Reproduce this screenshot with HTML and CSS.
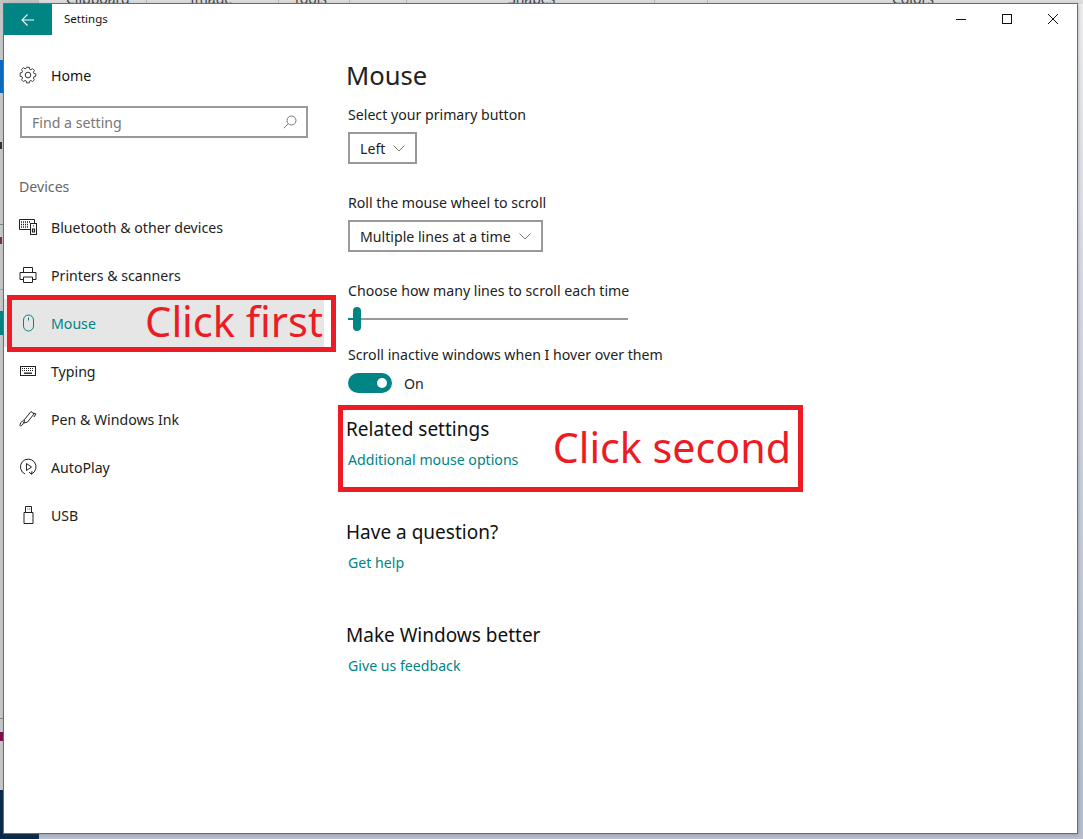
FILE: index.html
```html
<!DOCTYPE html>
<html lang="en">

<head>
    <meta charset="UTF-8">
    <title>Settings</title>
    <link rel="stylesheet" href="styles.css">
</head>

<body>
    <div class="desktop">
        <!-- bits of the app behind the window -->
        <div class="ribbon">
            <span class="ribbon-label label-clipboard">Clipboard</span>
            <span class="ribbon-label label-image">Image</span>
            <span class="ribbon-label label-tools">Tools</span>
            <span class="ribbon-label label-shapes">Shapes</span>
            <span class="ribbon-label label-colors">Colors</span>
        </div>
        <div class="strip-blue"></div>
        <div class="strip-glyph glyph-one"></div>
        <div class="strip-line line-one"></div>
        <div class="strip-glyph glyph-two"></div>
        <div class="strip-line line-two"></div>
        <div class="strip-teal"></div>
        <div class="strip-line line-three"></div>
        <div class="strip-purple"></div>
        <div class="strip-navy"></div>

        <div class="window">
            <div class="titlebar">
                <div class="back-button">
                    <svg width="16" height="16" viewBox="0 0 16 16" fill="none" stroke="#fff" stroke-width="1.1">
                        <path d="M2 8H14M7.5 2.5L2 8l5.500 5.500" />
                    </svg>
                </div>
                <div class="title">Settings</div>
                <div class="window-buttons">
                    <svg class="win-icon" width="12" height="12" viewBox="0 0 12 12" fill="none" stroke="#111">
                        <path d="M1 6.500H11" />
                    </svg>
                    <svg class="win-icon" width="12" height="12" viewBox="0 0 12 12" fill="none" stroke="#111">
                        <rect x="1.500" y="1.500" width="9" height="9" />
                    </svg>
                    <svg class="win-icon" width="12" height="12" viewBox="0 0 12 12" fill="none" stroke="#111">
                        <path d="M1 1L11 11M11 1L1 11" />
                    </svg>
                </div>
            </div>

            <div class="main">
                <div class="sidebar">
                    <div class="home-row">
                        <svg class="nav-icon" width="18" height="18" viewBox="0 0 18 18" fill="none" stroke="#333" stroke-width="1">
                            <path d="M7.600 1.200h2.800l.4 2.100 1.300.6 1.800-1.200 2 2-1.200 1.800.6 1.300 2 .4v2.800l-2 .4-.6 1.300 1.200 1.800-2 2-1.800-1.200-1.300.6-.4 2H7.600l-.4-2-1.300-.6-1.800 1.200-2-2 1.200-1.800-.6-1.300-2-.4V7.200l2-.4.6-1.300-1.200-1.800 2-2 1.800 1.200 1.300-.6z" transform="translate(.5 .1) scale(.94)" />
                            <circle cx="9" cy="9" r="2.800" />
                        </svg>
                        <span>Home</span>
                    </div>
                    <div class="search-box">
                        <span>Find a setting</span>
                        <svg width="14" height="14" viewBox="0 0 14 14" fill="none" stroke="#777">
                            <circle cx="8.500" cy="5.500" r="4.500" />
                            <path d="M5.300 8.700L.8 13.200" />
                        </svg>
                    </div>
                    <div class="section-label">Devices</div>
                    <div class="nav-list">
                        <div class="nav-item">
                            <svg class="nav-icon" width="18" height="18" viewBox="0 0 18 18" fill="none" stroke="#222">
                                <path d="M11 11.500H.5v-10h15V5" />
                                <path d="M2 4h10M2 6.500h7M2 9h7" stroke-dasharray="1 1" stroke-width="1.400" />
                                <rect x="11.500" y="5.500" width="6" height="11" fill="#fff" />
                                <path d="M14.500 7.500v1M13.500 11h2v3h-2z" stroke-width="1.200" />
                            </svg>
                            <span>Bluetooth &amp; other devices</span>
                        </div>
                        <div class="nav-item">
                            <svg class="nav-icon" width="18" height="18" viewBox="0 0 18 18" fill="none" stroke="#222">
                                <path d="M4.500 6V1.500h9V6M4.500 13.500H1V6.500h16v7h-3.500M4.500 11h9v5.500h-9z" />
                            </svg>
                            <span>Printers &amp; scanners</span>
                        </div>
                        <div class="nav-item nav-active">
                            <svg class="nav-icon" width="18" height="18" viewBox="0 0 18 18" fill="none" stroke="#008484">
                                <rect x="4.500" y="1" width="10" height="16" rx="5" />
                                <path d="M9.500 3.500v3" />
                            </svg>
                            <span>Mouse</span>
                        </div>
                        <div class="nav-item">
                            <svg class="nav-icon" width="18" height="18" viewBox="0 0 18 18" fill="none" stroke="#222">
                                <rect x="1.500" y="4.500" width="15" height="9" />
                                <path d="M3 6.500h12M3 8.500h12" stroke-dasharray="1 1" stroke-width="1.200" />
                                <path d="M5 11.200h8" stroke-width="1.400" />
                            </svg>
                            <span>Typing</span>
                        </div>
                        <div class="nav-item">
                            <svg class="nav-icon" width="18" height="18" viewBox="0 0 18 18" fill="none" stroke="#222">
                                <path d="M12 1.500l3 2.500-6.500 8-3.500 1 .5-3.500zM14.500 3l2.500 1-2 3" />
                                <path d="M5 12c-1 3-3.500 5-4 3.500-.5-1.500 2-4.500 3.800-5.500" />
                            </svg>
                            <span>Pen &amp; Windows Ink</span>
                        </div>
                        <div class="nav-item">
                            <svg class="nav-icon" width="18" height="18" viewBox="0 0 18 18" fill="none" stroke="#222">
                                <path d="M6 16A7.800 7.800 0 1 1 12.500 16" />
                                <path d="M10 14.200l2.500 2 .5-3" />
                                <path d="M7.500 5.500l5 3.500-5 3.500z" />
                            </svg>
                            <span>AutoPlay</span>
                        </div>
                        <div class="nav-item">
                            <svg class="nav-icon" width="18" height="18" viewBox="0 0 18 18" fill="none" stroke="#222">
                                <path d="M6.500 6.500V.5h6v6M5 6.500h9v11H5z" />
                                <path d="M8.500 3h.8M10.300 3h.8" />
                            </svg>
                            <span>USB</span>
                        </div>
                    </div>
                </div>

                <div class="content">
                    <h1 class="page-title">Mouse</h1>
                    <div class="field-label first-label">Select your primary button</div>
                    <div class="dropdown">
                        <span>Left</span>
                        <svg width="12" height="7" viewBox="0 0 12 7" fill="none" stroke="#777"><path d="M.5 .5L6 6l5.500-5.500" /></svg>
                    </div>
                    <div class="field-label roll-label">Roll the mouse wheel to scroll</div>
                    <div class="dropdown">
                        <span>Multiple lines at a time</span>
                        <svg width="12" height="7" viewBox="0 0 12 7" fill="none" stroke="#777"><path d="M.5 .5L6 6l5.500-5.500" /></svg>
                    </div>
                    <div class="field-label lines-label">Choose how many lines to scroll each time</div>
                    <div class="slider">
                        <div class="slider-fill"></div>
                        <div class="slider-thumb"></div>
                        <div class="slider-track"></div>
                    </div>
                    <div class="field-label inactive-label">Scroll inactive windows when I hover over them</div>
                    <div class="toggle-row">
                        <div class="toggle"><div class="toggle-knob"></div></div>
                        <span>On</span>
                    </div>

                    <h2 class="sub-title related">Related settings</h2>
                    <a class="link">Additional mouse options</a>
                    <h2 class="sub-title question">Have a question?</h2>
                    <a class="link">Get help</a>
                    <h2 class="sub-title better">Make Windows better</h2>
                    <a class="link">Give us feedback</a>
                </div>
            </div>
        </div>

        <!-- red annotations drawn on top of the screenshot -->
        <div class="callout callout-first">Click first</div>
        <div class="callout callout-second">Click second</div>
    </div>
</body>

</html>
```

FILE: styles.css
```css
body {
    margin: 0;
    font-family: "Noto Sans", "Open Sans", Arial, sans-serif;
    color: #111;
}

.desktop {
    position: relative;
    width: 1083px;
    height: 839px;
    overflow: hidden;
    background: linear-gradient(to bottom, #f2f2f2 0, #d8dbe2 300px, #b9c1d1 800px);
}

/* Window behind */
.ribbon {
    position: absolute;
    left: 0;
    top: 0;
    width: 100%;
    height: 4px;
    overflow: hidden;
    background:
        linear-gradient(#bbb, #bbb) 38px 0 / 1px 100% no-repeat,
        linear-gradient(#bbb, #bbb) 146px 0 / 1px 100% no-repeat,
        linear-gradient(#bbb, #bbb) 192px 0 / 1px 100% no-repeat,
        linear-gradient(#bbb, #bbb) 278px 0 / 1px 100% no-repeat,
        linear-gradient(#bbb, #bbb) 349px 0 / 1px 100% no-repeat,
        linear-gradient(#bbb, #bbb) 406px 0 / 1px 100% no-repeat,
        linear-gradient(#bbb, #bbb) 654px 0 / 1px 100% no-repeat,
        linear-gradient(#bbb, #bbb) 707px 0 / 1px 100% no-repeat,
        linear-gradient(#c4c4c4, #c4c4c4) 0 0 / 38px 100% no-repeat,
        #dedede;
}

.ribbon-label {
    position: absolute;
    top: -11px;
    font-size: 14px;
    color: #444;
}

.label-clipboard {
    left: 66px;
}

.label-image {
    left: 190px;
}

.label-tools {
    left: 293px;
}

.label-shapes {
    left: 508px;
}

.label-colors {
    left: 892px;
}

.strip-blue,
.strip-glyph,
.strip-line,
.strip-teal,
.strip-purple,
.strip-navy {
    position: absolute;
    left: 0;
}

.desktop::before {
    content: "";
    position: absolute;
    left: 0;
    top: 0;
    width: 3px;
    height: 790px;
    background: #c9caca;
}

.strip-blue {
    top: 60px;
    width: 3px;
    height: 33px;
    background: #0a6cc4;
}

.strip-glyph {
    width: 2px;
    height: 7px;
}

.glyph-one {
    top: 142px;
    background: #333;
}

.glyph-two {
    top: 237px;
    background: #7a3040;
}

.strip-line {
    width: 3px;
    height: 1px;
    background: #80868c;
}

.line-one {
    top: 224px;
}

.line-two {
    top: 289px;
    background: #a8a8a8;
}

.line-three {
    top: 718px;
}

.strip-teal {
    top: 311px;
    width: 4px;
    height: 24px;
    background: #008484;
}

.strip-purple {
    top: 732px;
    width: 3px;
    height: 9px;
    background: #7a1048;
}

.strip-navy {
    top: 790px;
    width: 39px;
    height: 49px;
    background: #0b2a4a;
}

/* Settings window */
.window {
    position: absolute;
    left: 3px;
    top: 3px;
    width: 1073px;
    height: 829px;
    display: flex;
    flex-direction: column;
    background: #fff;
    border: 1px solid #1a8f8f;
    box-shadow: 1px 1px 4px rgba(60, 70, 90, 0.3);
}

.titlebar {
    display: flex;
    align-items: center;
    height: 31px;
    flex-shrink: 0;
}

.back-button {
    display: flex;
    align-items: center;
    justify-content: center;
    width: 48px;
    height: 31px;
    background: #008484;
}

.title {
    margin: 0 0 2px 12px;
    font-size: 11.5px;
}

.window-buttons {
    display: flex;
    gap: 34px;
    margin-left: auto;
    padding: 0 18px 2px 0;
}

.win-icon {
    display: block;
}

.main {
    display: flex;
    flex: 1;
}

/* Sidebar */
.sidebar {
    width: 320px;
    flex-shrink: 0;
}

.home-row {
    display: flex;
    align-items: center;
    height: 48px;
    margin-top: 16px;
    padding-left: 15px;
    font-size: 14.15px;
}

.nav-icon {
    flex-shrink: 0;
    margin-right: 14px;
}

.search-box {
    display: flex;
    align-items: center;
    justify-content: space-between;
    box-sizing: border-box;
    width: 288px;
    height: 32px;
    margin: 7px 0 0 16px;
    padding: 0 9px 0 10px;
    border: 2px solid #999;
    font-size: 14.15px;
    color: #777;
}

.section-label {
    margin: 38px 0 0 15px;
    font-size: 14.15px;
    line-height: 22px;
    color: #666;
}

.nav-list {
    margin-top: 5px;
}

.nav-item {
    display: flex;
    align-items: center;
    height: 48px;
    padding-left: 15px;
    font-size: 14.15px;
    color: #222;
}

.nav-active {
    background: #e6e6e6;
    color: #008484;
}

/* Content */
.content {
    flex: 1;
    padding: 23px 0 0 24px;
}

.page-title {
    margin: 0 0 0 -2px;
    font-size: 25.6px;
    font-weight: 400;
    line-height: 36px;
    color: #222;
}

.field-label {
    font-size: 14.15px;
    line-height: 20px;
    color: #222;
}

.first-label {
    margin-top: 11px;
}

.roll-label {
    margin-top: 29px;
}

.lines-label {
    margin-top: 29px;
}

.inactive-label {
    margin-top: 14px;
}

.lines-label + .slider {
    margin-top: 6px;
}

.dropdown {
    display: inline-flex;
    align-items: center;
    gap: 8px;
    box-sizing: border-box;
    height: 32px;
    margin-top: 7px;
    padding: 0 10px;
    border: 2px solid #999;
    font-size: 14.15px;
    color: #222;
    vertical-align: top;
}

.slider {
    display: flex;
    align-items: center;
    width: 280px;
    height: 24px;
}

.slider-fill {
    width: 5px;
    height: 2px;
    background: #008484;
}

.slider-thumb {
    width: 8px;
    height: 24px;
    border-radius: 4px;
    background: #008484;
}

.slider-track {
    flex: 1;
    height: 2px;
    background: #999;
}

.toggle-row {
    display: flex;
    align-items: center;
    gap: 12px;
    margin-top: 8px;
    font-size: 14.15px;
    color: #222;
}

.toggle {
    display: flex;
    align-items: center;
    justify-content: flex-end;
    box-sizing: border-box;
    width: 44px;
    height: 20px;
    padding-right: 5px;
    border-radius: 10px;
    background: #008484;
}

.toggle-knob {
    width: 10px;
    height: 10px;
    border-radius: 50%;
    background: #fff;
}

.sub-title {
    margin: 0 0 0 -2px;
    font-size: 19px;
    font-weight: 400;
    line-height: 26px;
    color: #111;
}

.related {
    margin-top: 23px;
}

.question {
    margin-top: 49px;
}

.better {
    margin-top: 49px;
}

.link {
    display: block;
    margin-top: 8px;
    font-size: 14.15px;
    line-height: 20px;
    color: #008484;
}

/* Annotations */
.callout {
    position: absolute;
    display: flex;
    align-items: center;
    justify-content: flex-end;
    box-sizing: border-box;
    border: 5px solid #ed1c24;
    color: #ed1c24;
}

.callout-first {
    left: 7px;
    top: 295px;
    width: 329px;
    height: 57px;
    padding: 0 8px 5px 0;
    font-size: 41.6px;
}

.callout-second {
    left: 338px;
    top: 405px;
    width: 465px;
    height: 87px;
    padding: 0 7px 4px 0;
    font-size: 41.2px;
}
```
